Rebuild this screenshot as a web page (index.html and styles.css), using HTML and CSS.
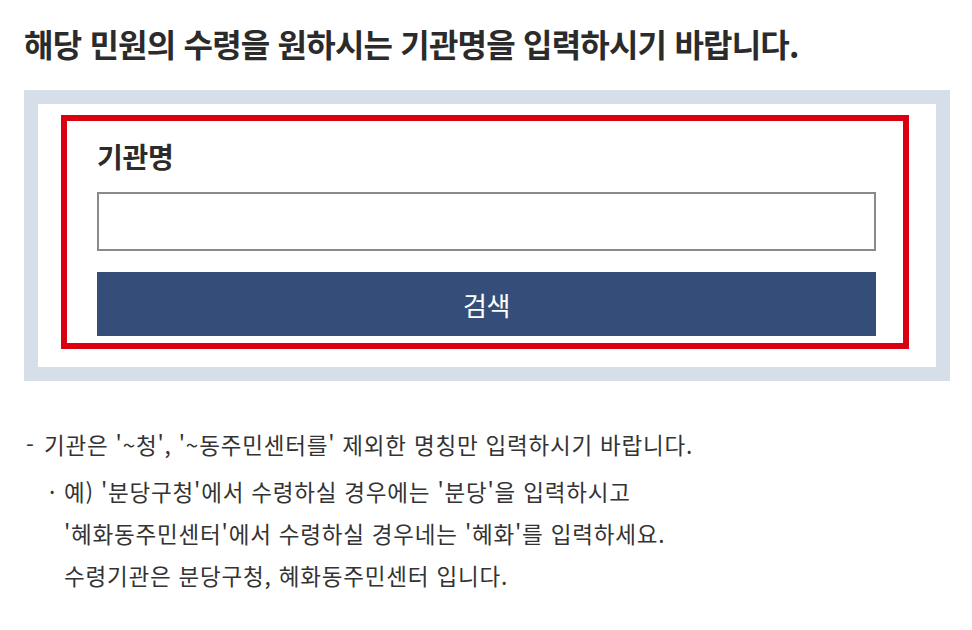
FILE: index.html
```html
<!DOCTYPE html>
<html lang="ko">
<head>
  <meta charset="UTF-8" />
  <meta name="viewport" content="width=device-width, initial-scale=1.0"/>
  <title>기관명 검색</title>
  <link rel="stylesheet" href="styles.css">
</head>
<body>
  <h1 class="page-title">해당 민원의 수령을 원하시는 기관명을 입력하시기 바랍니다.</h1>

  <div class="search-wrap">
    <div class="search-box">
      <label class="search-label" for="orgName">기관명</label>
      <input type="text" id="orgName" class="search-input">
      <button class="search-btn">검색</button>
    </div>
  </div>

  <ul class="notes">
    <li class="note-main">기관은 '~청', '~동주민센터를' 제외한 명칭만 입력하시기 바랍니다.
      <ul class="note-sub">
        <li>예) '분당구청'에서 수령하실 경우에는 '분당'을 입력하시고<br>
          '혜화동주민센터'에서 수령하실 경우네는 '혜화'를 입력하세요.<br>
          수령기관은 분당구청, 혜화동주민센터 입니다.</li>
      </ul>
    </li>
  </ul>
</body>
</html>
```

FILE: styles.css
```css
body {
  margin: 0;
  padding: 21px 22px 0 24px;
  font-family: "Noto Sans CJK KR", "Noto Sans", sans-serif;
  color: #222;
  background: #fff;
}

.page-title {
  margin: 0 0 25px 0;
  font-size: 32px;
  font-weight: 700;
  letter-spacing: -0.8px;
  line-height: 44px;
  color: #2b2b2b;
}

.search-wrap {
  border: 14px solid #d6deea;
  padding: 11px 27px 18px 23px;
}

.search-box {
  border: 6px solid #d9000f;
  padding: 16px 27px 7px 30px;
  display: flex;
  flex-direction: column;
}

.search-label {
  font-size: 28px;
  font-weight: 700;
  letter-spacing: -0.3px;
  line-height: 38px;
  color: #2b2b2b;
  margin-bottom: 17px;
}

.search-input {
  height: 59px;
  box-sizing: border-box;
  border: 2px solid #8a8a8a;
  margin: 0 0 21px;
  padding: 0 12px;
  font-size: 20px;
}

.search-btn {
  height: 64px;
  border: none;
  background: #344e79;
  color: #fff;
  font-family: inherit;
  font-size: 26px;
  letter-spacing: -0.5px;
}

.notes {
  list-style: none;
  margin: 42px 0 0;
  padding: 0;
  font-size: 22.5px;
  font-weight: 400;
  letter-spacing: 0.8px;
  color: #333;
}

.note-main {
  position: relative;
  padding-left: 20px;
  line-height: 42px;
}

.note-main::before {
  content: "-";
  position: absolute;
  left: 2px;
  top: 0;
}

.note-sub {
  list-style: none;
  margin: 5px 0 0;
  padding: 0 0 0 20px;
}

.note-sub li {
  position: relative;
  line-height: 42px;
}

.note-sub li::before {
  content: "·";
  position: absolute;
  left: -15px;
  top: 0;
}
```
